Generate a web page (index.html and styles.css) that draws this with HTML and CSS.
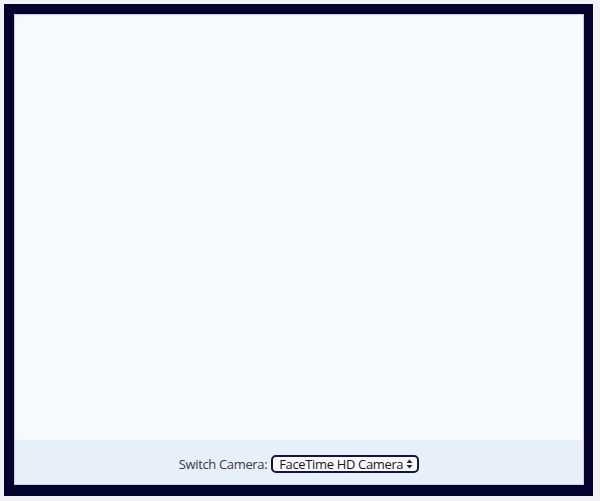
FILE: index.html
```html
<!DOCTYPE html>
<html>
<head>
<meta charset="utf-8">
<link rel="stylesheet" href="styles.css">
</head>
<body>
<div class="frame">
  <div class="inner">
    <div class="video"></div>
    <div class="bar">
      <span class="label">Switch Camera:</span>
      <span class="select">FaceTime HD Camera
        <svg class="arrows" width="7" height="10" viewBox="0 0 7 10"><path d="M3.5 0.5 L6.5 4 L0.5 4 Z M3.5 9.5 L6.5 6 L0.5 6 Z" fill="#222"/></svg>
      </span>
    </div>
  </div>
</div>
</body>
</html>
```
FILE: styles.css
```css
html, body {
  margin: 0;
  padding: 0;
  background: #f1f2f5;
}
.frame {
  margin: 4px 0 0 4px;
  width: 570px;
  height: 471px;
  border: 10px solid #03032d;
  border-right-width: 9px;
  border-bottom-width: 11px;
  box-sizing: content-box;
}
.inner {
  height: 100%;
  display: flex;
  flex-direction: column;
  background: #f6f9fd;
  box-shadow: inset 0 0 0 1px #c9cfdc;
}
.video {
  flex: 1;
}
.bar {
  height: 44px;
  background: #e7eff8;
  display: flex;
  align-items: center;
  justify-content: center;
  gap: 4px;
  font-family: "Open Sans", "Noto Sans", sans-serif;
  font-size: 13px;
  letter-spacing: -0.35px;
  color: #3a3a48;
  margin: 0 1px 1px 1px;
  padding-top: 3px;
  box-sizing: border-box;
}
.select {
  display: inline-flex;
  align-items: center;
  gap: 3px;
  height: 14px;
  padding: 0 4px 0 6px;
  border: 2px solid #14163c;
  border-radius: 5px;
  background: #f7f9fc;
  color: #1a1a24;
  line-height: 14px;
}
.arrows {
  display: block;
}
```
